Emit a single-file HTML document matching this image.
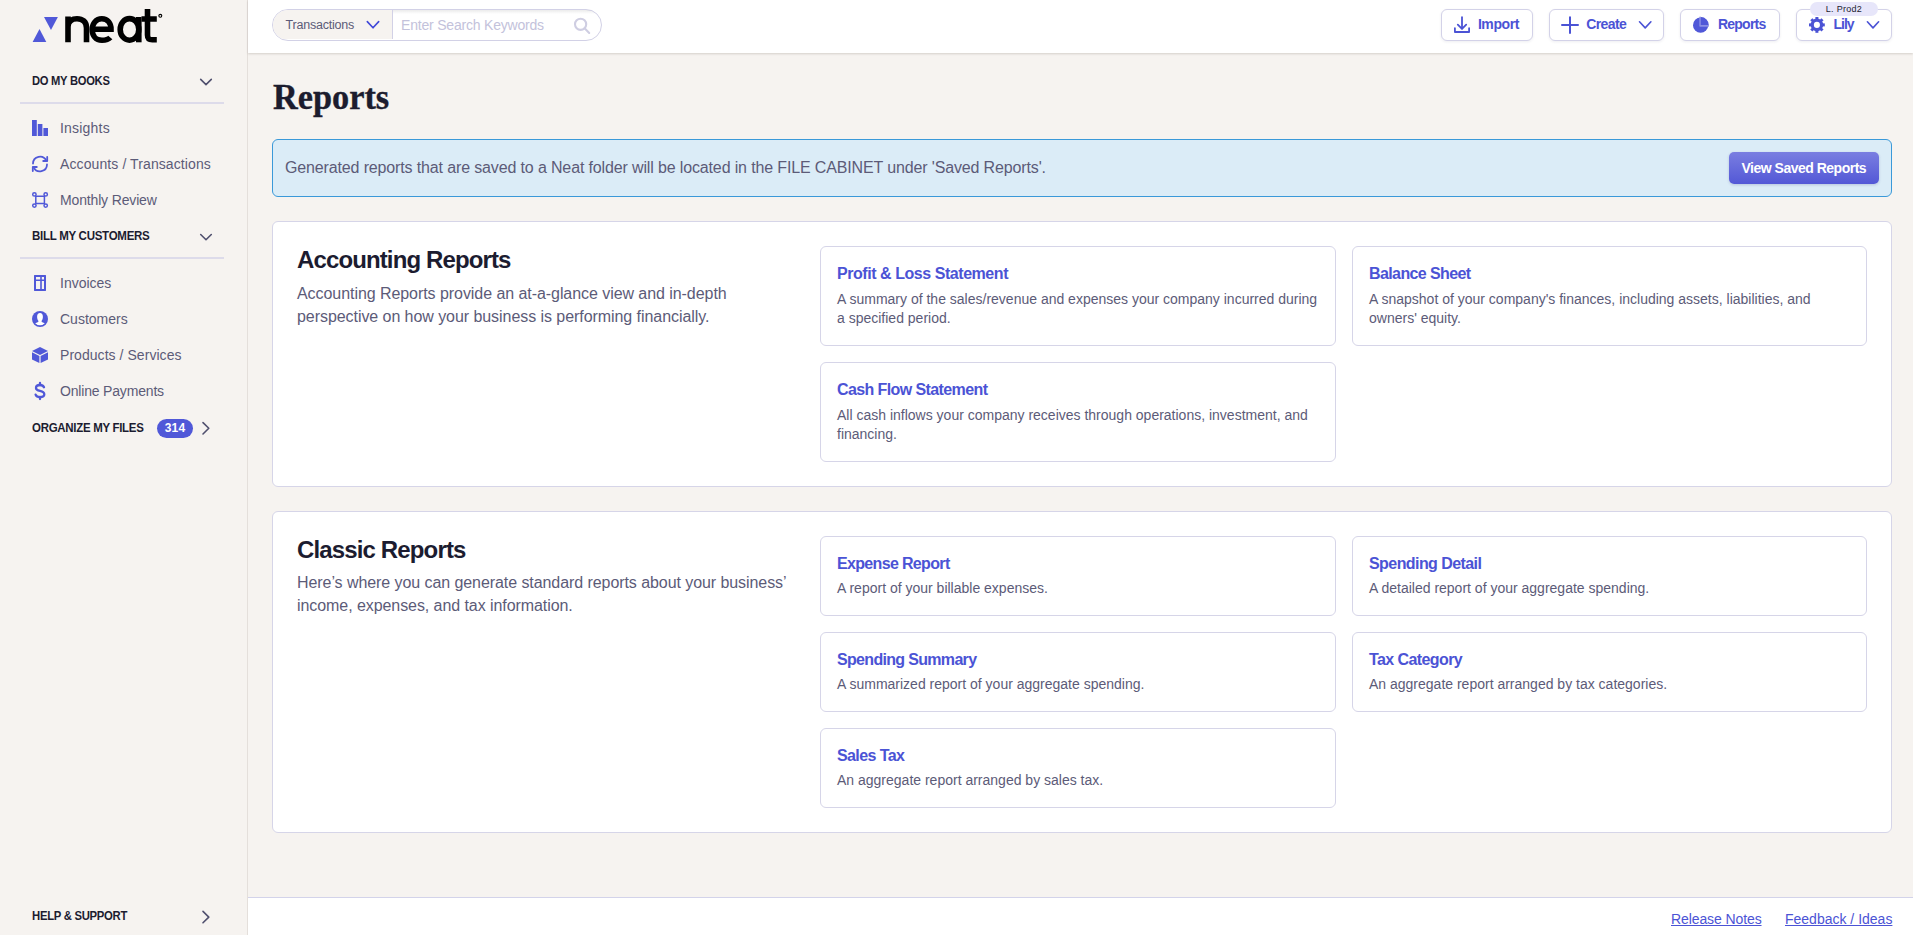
<!DOCTYPE html>
<html><head><meta charset="utf-8">
<style>
*{box-sizing:border-box;margin:0;padding:0}
html,body{width:1913px;height:935px;overflow:hidden;background:#f6f3f0;font-family:"Liberation Sans",sans-serif;}
.a{position:absolute;white-space:nowrap}
#side{position:absolute;left:0;top:0;width:248px;height:935px;background:#f6f3f0;border-right:1px solid #e4dfdb}
.sec{position:absolute;left:32px;transform-origin:0 0;font-size:12px;font-weight:bold;color:#1c1c30;line-height:14px;white-space:nowrap}
.divider{position:absolute;left:20px;width:204px;height:2px;background:#dddbea}
.nav{position:absolute;left:60px;font-size:14px;color:#5c5b78;line-height:16px;white-space:nowrap}
svg.i{position:absolute;overflow:visible}
#hdr{position:absolute;left:248px;top:0;width:1665px;height:53px;background:#fff;box-shadow:0 1px 2px rgba(60,50,40,0.18)}
.btn{position:absolute;top:9px;height:32px;border:1px solid #d3d2e8;border-radius:6px;background:#fff;box-shadow:0 1px 3px rgba(40,40,80,0.08)}
.bt{position:absolute;top:7px;font-size:14px;font-weight:bold;color:#4b53d5;line-height:16px;letter-spacing:-0.5px;white-space:nowrap}
.card{position:absolute;left:272px;width:1620px;background:#fff;border:1px solid #d6d5e8;border-radius:6px}
.rc{position:absolute;width:516px;background:#fff;border:1px solid #d6d5e8;border-radius:6px}
.rc h3{position:absolute;left:16px;top:17.5px;font-size:16px;font-weight:bold;color:#4b53d5;line-height:18px;letter-spacing:-0.6px;white-space:nowrap}
.rc p{position:absolute;left:16px;top:42.6px;font-size:14px;color:#5c5b78;line-height:19px;width:490px}
.ch{position:absolute;left:24px;top:24px;font-size:24px;font-weight:bold;color:#1c1c30;line-height:28px;letter-spacing:-0.88px;white-space:nowrap}
.cd{position:absolute;left:24px;top:60px;font-size:16px;color:#5c5b78;line-height:23px;width:500px;letter-spacing:-0.06px}
.rc1 p{top:42px !important}
svg.i path{stroke-linecap:round;stroke-linejoin:round}
svg.logo path{stroke-linecap:butt;stroke-linejoin:miter}
</style></head><body>
<div id="side">
  <svg class="i logo" style="left:0;top:0" width="200" height="50" viewBox="0 0 200 50">
    <polygon points="32.6,42 46.3,42 39.5,29" fill="#5058d8"/>
    <polygon points="44,17 57.9,17 51,30" fill="#5058d8"/>
    <g fill="none" stroke="#000" stroke-width="5.6">
      <path d="M68,42.3 V16.5 M68,27 C68,20.5 72.5,18.7 77,18.7 C82.5,18.7 86.5,21.5 86.5,28 V42.3"/>
      <path d="M110.3,37.5 C108.5,39.5 105.5,40.2 102,40.2 C95.5,40.2 92.2,35 92.2,29.4 C92.2,23.8 96,18.8 101.8,18.8 C107.7,18.8 111,23.5 111,29.2 H92.5"/>
      <ellipse cx="129.5" cy="29.4" rx="9.3" ry="10.8"/>
      <path d="M138.8,17 V42.3"/>
      <path d="M147.5,9 V35 C147.5,38.5 149,39.8 152.3,39.8 H156.8 M141.5,19 H156.8"/>
    </g>
    <circle cx="160.3" cy="15.8" r="2" fill="#000"/><circle cx="160.3" cy="15.8" r="0.9" fill="#f6f3f0"/>
  </svg>
  <div class="sec" style="top:73.6px;letter-spacing:-0.3px;transform:scaleX(0.933)">DO MY BOOKS</div>
  <svg class="i" style="left:0;top:0" width="1" height="1"><path d="M200.7,79.4 L206,84.6 L211.3,79.4" fill="none" stroke="#50506e" stroke-width="1.6"/></svg>
  <div class="divider" style="top:102px"></div>

  <svg class="i" style="left:0;top:0" width="1" height="1">
    <rect x="32" y="120" width="4.8" height="16" fill="#5058d8"/>
    <rect x="37.8" y="124" width="4.6" height="12" fill="#5058d8"/>
    <rect x="43.4" y="128" width="4.6" height="8" fill="#5058d8"/>
  </svg>
  <div class="nav" style="top:120.2px;letter-spacing:0.2px">Insights</div>

  <svg class="i" style="left:0;top:0" width="1" height="1" fill="none" stroke="#5058d8" stroke-width="1.8">
    <path d="M33,163.5 A7,7 0 0 1 46.3,160.6"/>
    <path d="M47.2,157 V161 H43.2"/>
    <path d="M47,164.5 A7,7 0 0 1 33.7,167.4"/>
    <path d="M32.8,171 V167 H36.8"/>
  </svg>
  <div class="nav" style="top:156px;letter-spacing:0.1px">Accounts / Transactions</div>

  <svg class="i" style="left:0;top:0" width="1" height="1" fill="none" stroke="#5058d8" stroke-width="1.5">
    <path d="M35.8,196.3 H44.4 V203.6 H35.8 Z"/>
    <circle cx="34.4" cy="194.4" r="1.7"/><circle cx="45.7" cy="194.4" r="1.7"/>
    <circle cx="34.4" cy="205.6" r="1.7"/><circle cx="45.7" cy="205.6" r="1.7"/>
  </svg>
  <div class="nav" style="top:192px;letter-spacing:-0.15px">Monthly Review</div>

  <div class="sec" style="top:228.7px;letter-spacing:-0.3px;transform:scaleX(0.961)">BILL MY CUSTOMERS</div>
  <svg class="i" style="left:0;top:0" width="1" height="1"><path d="M200.7,234.5 L206,239.7 L211.3,234.5" fill="none" stroke="#50506e" stroke-width="1.6"/></svg>
  <div class="divider" style="top:257px"></div>

  <svg class="i" style="left:0;top:0" width="1" height="1">
    <path fill="#5058d8" fill-rule="evenodd" d="M34.5,275 H45.5 A0.6,0.6 0 0 1 46,275.5 V290.5 A0.6,0.6 0 0 1 45.5,291 H34.5 A0.6,0.6 0 0 1 34,290.5 V275.5 A0.6,0.6 0 0 1 34.5,275 Z M36,277 V279.6 H40.2 V277 Z M41.8,277 V279.6 H44 V277 Z M36,281.1 V289 H40.2 V281.1 Z M41.8,281.1 V289 H44 V281.1 Z"/>
  </svg>
  <div class="nav" style="top:275.2px">Invoices</div>

  <svg class="i" style="left:0;top:0" width="1" height="1">
    <defs><clipPath id="cc"><circle cx="40" cy="319" r="6.3"/></clipPath></defs>
    <circle cx="40" cy="319" r="8" fill="#5058d8"/>
    <path clip-path="url(#cc)" fill="#fff" d="M40,312.9 C41.9,312.9 42.9,314.5 42.9,316.8 C42.9,318.6 42.3,320.1 41.5,320.9 C41.5,321.9 42.3,322.3 43.6,322.7 C45.3,323.2 46.3,324.2 46.5,327 H33.5 C33.7,324.2 34.7,323.2 36.4,322.7 C37.7,322.3 38.5,321.9 38.5,320.9 C37.7,320.1 37.1,318.6 37.1,316.8 C37.1,314.5 38.1,312.9 40,312.9 Z"/>
  </svg>
  <div class="nav" style="top:311px">Customers</div>

  <svg class="i" style="left:0;top:0" width="1" height="1">
    <path fill="#5058d8" d="M40,347 L48,351.1 L40,355 L32,351.1 Z"/>
    <path fill="#5058d8" d="M32,352.3 L39.4,356 V362.9 L32,359.4 Z"/>
    <path fill="#5058d8" d="M48,352.3 L40.6,356 V362.9 L48,359.4 Z"/>
  </svg>
  <div class="nav" style="top:347px;letter-spacing:0.05px">Products / Services</div>

  <svg class="i" style="left:0;top:0" width="1" height="1" fill="none" stroke="#5058d8" stroke-width="2.3">
    <path d="M44,387.3 C43.4,385.8 42,385 40,385 C37.6,385 36,386.1 36,388 C36,389.8 37.5,390.4 40,390.9 C42.6,391.4 44.3,392.2 44.3,394.3 C44.3,396.2 42.5,397.1 40,397.1 C37.7,397.1 36.2,396.3 35.6,394.6"/>
    <path d="M40,383 V385.2 M40,396.9 V399"/>
  </svg>
  <div class="nav" style="top:383px;letter-spacing:-0.18px">Online Payments</div>

  <div class="sec" style="top:420.8px;letter-spacing:-0.3px;transform:scaleX(0.956)">ORGANIZE MY FILES</div>
  <div class="a" style="left:157px;top:419px;width:36px;height:19px;border-radius:10px;background:#5058d8;color:#fff;font-size:12px;font-weight:bold;line-height:19px;text-align:center;letter-spacing:0.2px">314</div>
  <svg class="i" style="left:0;top:0" width="1" height="1"><path d="M203,422.6 L208.8,428.3 L203,434" fill="none" stroke="#50506e" stroke-width="1.6"/></svg>

  <div class="sec" style="top:908.9px;letter-spacing:-0.3px;transform:scaleX(0.942)">HELP &amp; SUPPORT</div>
  <svg class="i" style="left:0;top:0" width="1" height="1"><path d="M203,911.4 L208.8,917.1 L203,922.8" fill="none" stroke="#50506e" stroke-width="1.6"/></svg>
</div>

<div id="hdr"></div>
<!-- search group -->
<div class="a" style="left:272px;top:9px;width:330px;height:32px;border:1.5px solid #d2d1e6;border-radius:16px;background:#fff;overflow:hidden">
  <div class="a" style="left:0;top:0;width:119.5px;height:29px;background:#f6f3f0;border-right:1.5px solid #d2d1e6"></div>
  <div class="a" style="left:120px;top:0;width:210px;height:4px;background:linear-gradient(rgba(0,0,0,0.08),rgba(0,0,0,0))"></div>
</div>
<div class="a" style="left:285.6px;top:17.6px;font-size:12.5px;line-height:14px;color:#5c5b78;letter-spacing:-0.22px">Transactions</div>
<svg class="i" style="left:0;top:0" width="1" height="1"><path d="M367.3,21.6 L373,27.8 L378.7,21.6" fill="none" stroke="#4048d8" stroke-width="1.6"/></svg>
<div class="a" style="left:401px;top:17.2px;font-size:14px;line-height:16px;color:#c3c2db;letter-spacing:-0.2px">Enter Search Keywords</div>
<svg class="i" style="left:0;top:0" width="1" height="1" fill="none" stroke="#cfcee2" stroke-width="2.1">
  <circle cx="580.6" cy="24.3" r="5.6"/><path d="M584.6,28.3 L589.2,32.9"/>
</svg>

<!-- header buttons -->
<div class="btn" style="left:1441px;width:92px"></div>
<svg class="i" style="left:0;top:0" width="1" height="1" fill="none" stroke="#4b53d5" stroke-width="1.8">
  <path d="M1462,17.2 V28.4"/><path d="M1457.8,24.6 L1462,28.8 L1466.2,24.6"/>
  <path d="M1454.9,28.2 V32 H1469.1 V28.2"/>
</svg>
<div class="bt" style="left:1477.9px;top:16.3px;letter-spacing:-0.42px">Import</div>

<div class="btn" style="left:1549px;width:115px"></div>
<svg class="i" style="left:0;top:0" width="1" height="1" fill="none" stroke="#4b53d5" stroke-width="2">
  <path d="M1570,17.2 V32.9 M1562,25 H1578"/>
</svg>
<div class="bt" style="left:1586.2px;top:16.3px;letter-spacing:-0.6px">Create</div>
<svg class="i" style="left:0;top:0" width="1" height="1"><path d="M1639.5,21.8 L1645.2,27.9 L1650.9,21.8" fill="none" stroke="#4b53d5" stroke-width="1.6"/></svg>

<div class="btn" style="left:1680px;width:100px"></div>
<svg class="i" style="left:0;top:0" width="1" height="1">
  <circle cx="1700.6" cy="25.2" r="7.6" fill="#5058d8"/>
  <path fill="none" stroke="#8b90e4" stroke-width="1.6" d="M1700.1,17.4 V25.9 H1708.3"/>
  <path fill="#5058d8" d="M1700.9,17.1 A7.9,7.9 0 0 1 1708.8,25 H1700.9 Z"/>
</svg>
<div class="bt" style="left:1717.9px;top:16.3px;letter-spacing:-0.75px">Reports</div>

<div class="btn" style="left:1796px;width:96px"></div>
<svg class="i" style="left:0;top:0" width="1" height="1">
  <g fill="#4b53d5">
    <rect x="1815.4" y="17" width="3" height="15.8"/>
    <rect x="1815.4" y="17" width="3" height="15.8" transform="rotate(45 1816.9 24.9)"/>
    <rect x="1815.4" y="17" width="3" height="15.8" transform="rotate(90 1816.9 24.9)"/>
    <rect x="1815.4" y="17" width="3" height="15.8" transform="rotate(135 1816.9 24.9)"/>
  </g>
  <circle cx="1816.9" cy="24.9" r="4.7" fill="none" stroke="#4b53d5" stroke-width="3.2"/>
  <circle cx="1816.9" cy="24.9" r="3.05" fill="#fff"/>
</svg>
<div class="bt" style="left:1833.6px;top:16.3px;letter-spacing:-1.05px">Lily</div>
<svg class="i" style="left:0;top:0" width="1" height="1"><path d="M1867.4,21.8 L1873,27.9 L1878.6,21.8" fill="none" stroke="#4b53d5" stroke-width="1.6"/></svg>
<div class="a" style="left:1810px;top:2px;width:68px;height:14px;border-radius:7px;background:#e7e6fa"></div>
<div class="a" style="left:1825.8px;top:3.8px;font-size:9px;line-height:10px;color:#1c1c30;letter-spacing:0.28px">L. Prod2</div>

<!-- title -->
<div class="a" style="left:272.5px;top:77.6px;font-family:'Liberation Serif',serif;font-weight:bold;font-size:35px;line-height:40px;color:#1c1c2e;transform:scaleX(0.98);transform-origin:0 0;-webkit-text-stroke:0.35px #1c1c2e">Reports</div>

<!-- banner -->
<div class="a" style="left:272px;top:139px;width:1620px;height:58px;background:#dbecf7;border:1px solid #3a99d9;border-radius:6px"></div>
<div class="a" style="left:285px;top:159.2px;font-size:16px;line-height:18px;color:#5c5b78;letter-spacing:-0.14px">Generated reports that are saved to a Neat folder will be located in the FILE CABINET under 'Saved Reports'.</div>
<div class="a" style="left:1729px;top:152px;width:150px;height:32px;border-radius:5px;background:linear-gradient(#7a7ee1,#5358d6);box-shadow:0 1px 3px rgba(40,40,120,0.2)"></div>
<div class="a" style="left:1741.5px;top:160.4px;font-size:14px;font-weight:bold;line-height:16px;color:#fff;letter-spacing:-0.5px">View Saved Reports</div>

<!-- accounting card -->
<div class="card" style="top:221px;height:266px">
  <div class="ch" style="top:23.6px">Accounting Reports</div>
  <div class="cd" style="top:59.9px">Accounting Reports provide an at-a-glance view and in-depth perspective on how your business is performing financially.</div>
</div>
<div class="card" style="top:511px;height:322px">
  <div class="ch" style="top:23.7px;letter-spacing:-0.86px">Classic Reports</div>
  <div class="cd" style="top:59.1px;letter-spacing:-0.07px;width:505px">Here’s where you can generate standard reports about your business’ income, expenses, and tax information.</div>
</div>

<div class="rc" style="left:820px;top:246px;height:100px"><h3 style="letter-spacing:-0.45px">Profit &amp; Loss Statement</h3><p>A summary of the sales/revenue and expenses your company incurred during a specified period.</p></div>
<div class="rc" style="left:1352px;top:246px;height:100px;width:515px"><h3>Balance Sheet</h3><p>A snapshot of your company's finances, including assets, liabilities, and owners' equity.</p></div>
<div class="rc" style="left:820px;top:362px;height:100px"><h3>Cash Flow Statement</h3><p>All cash inflows your company receives through operations, investment, and financing.</p></div>
<div class="rc rc1" style="left:820px;top:536px;height:80px"><h3 style="letter-spacing:-0.66px">Expense Report</h3><p>A report of your billable expenses.</p></div>
<div class="rc rc1" style="left:1352px;top:536px;height:80px;width:515px"><h3 style="letter-spacing:-0.57px">Spending Detail</h3><p>A detailed report of your aggregate spending.</p></div>
<div class="rc rc1" style="left:820px;top:632px;height:80px"><h3 style="letter-spacing:-0.68px">Spending Summary</h3><p>A summarized report of your aggregate spending.</p></div>
<div class="rc rc1" style="left:1352px;top:632px;height:80px;width:515px"><h3 style="letter-spacing:-0.59px">Tax Category</h3><p>An aggregate report arranged by tax categories.</p></div>
<div class="rc rc1" style="left:820px;top:728px;height:80px"><h3>Sales Tax</h3><p>An aggregate report arranged by sales tax.</p></div>

<!-- footer -->
<div class="a" style="left:248px;top:897px;width:1665px;height:38px;background:#fff;border-top:1px solid #d3d3ea"></div>
<div class="a" style="left:1671px;top:910.9px;font-size:14px;line-height:16px;color:#4b53d5;text-decoration:underline;letter-spacing:-0.1px">Release Notes</div>
<div class="a" style="left:1785px;top:910.9px;font-size:14px;line-height:16px;color:#4b53d5;text-decoration:underline">Feedback / Ideas</div>
</body></html>
